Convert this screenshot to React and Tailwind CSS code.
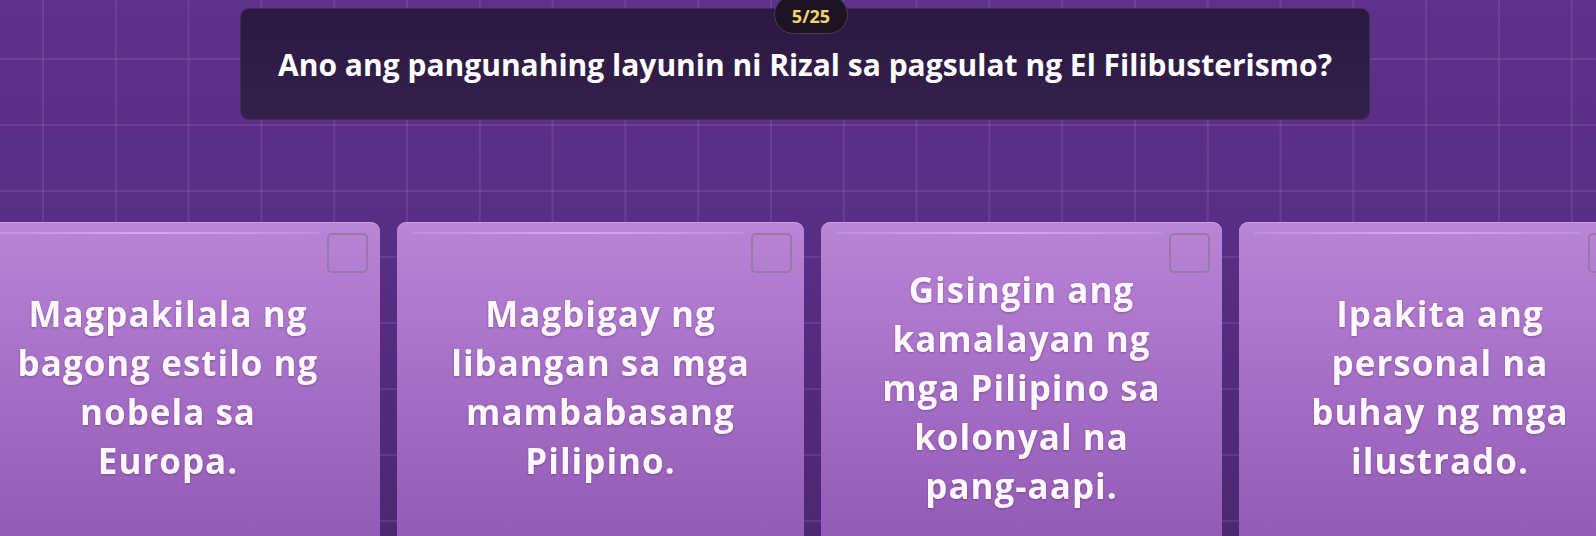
import React from 'react';

const answers = [
  { w: 'w-[424px]', lines: ['Magpakilala ng', 'bagong estilo ng', 'nobela sa', 'Europa.'] },
  { w: 'w-[407px]', lines: ['Magbigay ng', 'libangan sa mga', 'mambabasang', 'Pilipino.'] },
  { w: 'w-[401px]', lines: ['Gisingin ang', 'kamalayan ng', 'mga Pilipino sa', 'kolonyal na', 'pang-aapi.'] },
  { w: 'w-[402px]', lines: ['Ipakita ang', 'personal na', 'buhay ng mga', 'ilustrado.'] },
];

const AnswerCard = ({ w, lines }) => (
  <div
    className={`relative ${w} h-[330px] shrink-0 rounded-t-[9px] bg-linear-to-b from-[#b985d6] via-[#a56ec6] to-[#9159b3] pt-[10px] flex flex-col shadow-[inset_0_1px_0_rgba(255,255,255,0.25)]`}
  >
    {/* top highlight */}
    <div className="mx-[15px] mr-[60px] h-[2px] bg-linear-to-r from-white/10 via-white/35 to-white/10" />
    {/* checkbox */}
    <div className="absolute top-[11px] right-[12px] w-[41px] h-[40px] rounded-[5px] border-2 border-[#977aa9]" />
    <div className="flex-1 flex flex-col items-center justify-center pb-[12px] text-[#fff8ff] text-[35px] leading-[49px] tracking-[1px] font-bold text-center font-['Open_Sans',sans-serif] drop-shadow-[0_1px_1px_rgba(60,20,80,0.35)]">
      {lines.map((l) => (
        <span key={l} className="block whitespace-nowrap">{l}</span>
      ))}
    </div>
  </div>
);

export default function App() {
  return (
    <div className="w-full h-[536px] overflow-hidden bg-linear-to-b from-[#5e318b] via-[#582d84] to-[#4c2773]">
      <div className="h-full pt-[8px] bg-[linear-gradient(to_right,rgba(230,190,255,0.11)_2px,transparent_2px),linear-gradient(to_bottom,rgba(230,190,255,0.11)_2px,transparent_2px)] bg-[size:72.8px_66px] bg-[position:42px_58px]">
        {/* question */}
        <div className="relative ml-[240px] w-[1130px] h-[112px] rounded-[9px] bg-linear-to-b from-[#2c1842] to-[#33204c] border border-[#3f2a58] flex items-center justify-center">
          <div className="absolute -top-[14px] left-[533px] w-[74px] h-[39px] rounded-full bg-[#1c1323] border border-[#4b3b57] flex items-end justify-center pb-[8px]">
            <span className="text-[#f4d56c] text-[18px] leading-none font-bold font-['Open_Sans',sans-serif]">5/25</span>
          </div>
          <h1 className="text-white text-[30px] font-bold font-['Open_Sans',sans-serif]">
            Ano ang pangunahing layunin ni Rizal sa pagsulat ng El Filibusterismo?
          </h1>
        </div>

        {/* answers */}
        <div className="mt-[102px] ml-[-44px] flex gap-[17px]">
          {answers.map((a) => (
            <AnswerCard key={a.lines[0]} {...a} />
          ))}
        </div>
      </div>
    </div>
  );
}
